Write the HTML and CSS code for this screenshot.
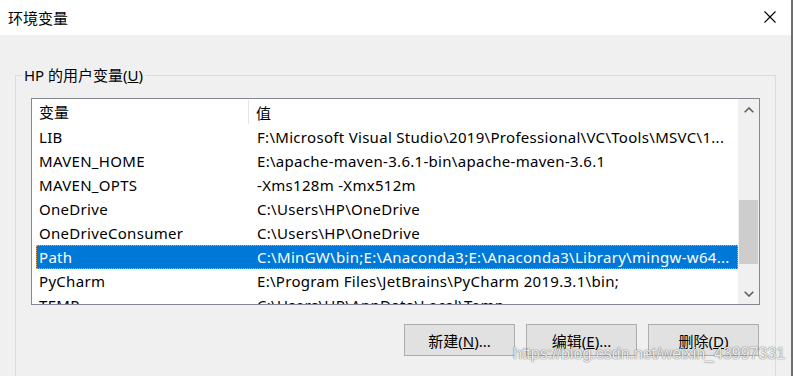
FILE: index.html
```html
<!DOCTYPE html>
<html lang="zh-CN">
<head>
    <meta charset="UTF-8">
    <meta name="viewport" content="width=device-width, initial-scale=1.0">
    <title>环境变量</title>
    <link rel="stylesheet" href="styles.css">
</head>
<body>

<div class="window">
    <div class="titlebar">
        <span class="title">环境变量</span>
        <svg class="close" width="12" height="12" viewBox="0 0 12 12">
            <path d="M0.5 0.5 L11.5 11.5 M11.5 0.5 L0.5 11.5" stroke="#000" stroke-width="1.1" fill="none"/>
        </svg>
    </div>

    <fieldset class="group">
        <legend>HP 的用户变量(<u>U</u>)</legend>

        <div class="list">
            <div class="list-body">
                <div class="list-header">
                    <div class="col-name">变量</div>
                    <div class="col-value">值</div>
                </div>
                <div class="rows">
                    <div class="row"><div class="col-name">LIB</div><div class="col-value">F:\Microsoft Visual Studio\2019\Professional\VC\Tools\MSVC\1...</div></div>
                    <div class="row"><div class="col-name">MAVEN_HOME</div><div class="col-value">E:\apache-maven-3.6.1-bin\apache-maven-3.6.1</div></div>
                    <div class="row"><div class="col-name">MAVEN_OPTS</div><div class="col-value">-Xms128m -Xmx512m</div></div>
                    <div class="row"><div class="col-name">OneDrive</div><div class="col-value">C:\Users\HP\OneDrive</div></div>
                    <div class="row"><div class="col-name">OneDriveConsumer</div><div class="col-value">C:\Users\HP\OneDrive</div></div>
                    <div class="row selected"><div class="col-name">Path</div><div class="col-value">C:\MinGW\bin;E:\Anaconda3;E:\Anaconda3\Library\mingw-w64...</div></div>
                    <div class="row"><div class="col-name">PyCharm</div><div class="col-value">E:\Program Files\JetBrains\PyCharm 2019.3.1\bin;</div></div>
                    <div class="row"><div class="col-name">TEMP</div><div class="col-value">C:\Users\HP\AppData\Local\Temp</div></div>
                </div>
            </div>
            <div class="scrollbar">
                <div class="arrow">
                    <svg width="10" height="6" viewBox="0 0 10 6"><path d="M0.7 5.3 L5 1 L9.3 5.3" stroke="#606060" stroke-width="1.6" fill="none"/></svg>
                </div>
                <div class="track">
                    <div class="thumb" style="margin-top: 80px; height: 64px;"></div>
                </div>
                <div class="arrow">
                    <svg width="10" height="6" viewBox="0 0 10 6"><path d="M0.7 0.7 L5 5 L9.3 0.7" stroke="#606060" stroke-width="1.6" fill="none"/></svg>
                </div>
            </div>
        </div>

        <div class="buttons">
            <button>新建(<u>N</u>)...</button>
            <button>编辑(<u>E</u>)...</button>
            <button>删除(<u>D</u>)</button>
        </div>
    </fieldset>

    <div class="watermark">https://blog.csdn.net/weixin_43997331</div>
</div>

</body>
</html>
```

FILE: styles.css
```css
html, body {
    margin: 0;
    padding: 0;
}
body {
    width: 793px;
    height: 376px;
    overflow: hidden;
    font-family: "Noto Sans", "Noto Sans CJK SC", sans-serif;
    font-size: 15px;
    color: #000;
}
.window {
    position: relative;
    width: 793px;
    height: 376px;
    background-color: #f0f0f0;
    box-sizing: border-box;
    border-right: 2px solid #6e6e6e;
    overflow: hidden;
}
.titlebar {
    height: 35px;
    background-color: #fff;
    display: flex;
    align-items: center;
    justify-content: space-between;
    padding: 0 15px 0 8px;
}
.title {
    font-family: "Noto Sans CJK SC", sans-serif;
    font-size: 15px;
    line-height: 20px;
}
.close {
    display: block;
    margin-top: -2px;
}
.group {
    margin: 30px 0 0 15px;
    width: 761px;
    box-sizing: border-box;
    padding: 12px 15px 40px 15px;
    border: 1px solid #dcdcdc;
    min-width: 0;
}
.group legend {
    padding: 0 2px;
    margin-left: -9px;
    line-height: 21px;
    height: 21px;
    font-size: 15px;
}
.list {
    display: flex;
    height: 207px;
    box-sizing: border-box;
    border: 1px solid #828790;
    background-color: #fff;
}
.list-body {
    flex: 1;
    min-width: 0;
    display: flex;
    flex-direction: column;
}
.list-header {
    display: flex;
    height: 26px;
    align-items: center;
}
.list-header .col-name {
    border-right: 1px solid #e5e5e5;
    height: 24px;
    line-height: 24px;
    font-family: "Noto Sans CJK SC", sans-serif;
}
.list-header .col-value {
    font-family: "Noto Sans CJK SC", sans-serif;
}
.rows {
    flex: 1;
    overflow: hidden;
}
.row {
    display: flex;
    height: 24px;
    line-height: 22px;
    box-sizing: border-box;
    border: 1px solid transparent;
    margin-left: 4px;
    letter-spacing: 0.3px;
}
.row.selected {
    background-color: #0078d7;
    color: #fff;
    border: 1px dotted #e8a35c;
}
.col-name {
    width: 217px;
    flex-shrink: 0;
    box-sizing: border-box;
    padding-left: 7px;
    white-space: nowrap;
    overflow: hidden;
}
.row .col-name {
    width: 213px;
    padding-left: 2px;
}
.col-value {
    flex: 1;
    min-width: 0;
    padding-left: 7px;
    white-space: nowrap;
    overflow: hidden;
}
.scrollbar {
    width: 21px;
    background-color: #f0f0f0;
    display: flex;
    flex-direction: column;
}
.arrow {
    height: 21px;
    display: flex;
    align-items: center;
    justify-content: center;
}
.track {
    flex: 1;
}
.thumb {
    margin: 0 1px;
    background-color: #cdcdcd;
}
.buttons {
    display: flex;
    justify-content: flex-end;
    gap: 11px;
    margin-top: 19px;
    padding-right: 1px;
}
.buttons button {
    width: 111px;
    height: 32px;
    background-color: #e1e1e1;
    border: 1px solid #adadad;
    font-family: "Noto Sans", "Noto Sans CJK SC", sans-serif;
    font-size: 15px;
    color: #000;
    padding: 0;
}
.watermark {
    position: absolute;
    left: 513px;
    top: 345px;
    font-family: "Liberation Sans", sans-serif;
    font-size: 16px;
    color: rgba(255, 255, 255, 0.9);
    text-shadow: 0 0 1px rgba(0, 0, 0, 0.6), 0 0 2px rgba(0, 0, 0, 0.25);
    white-space: nowrap;
}
```
